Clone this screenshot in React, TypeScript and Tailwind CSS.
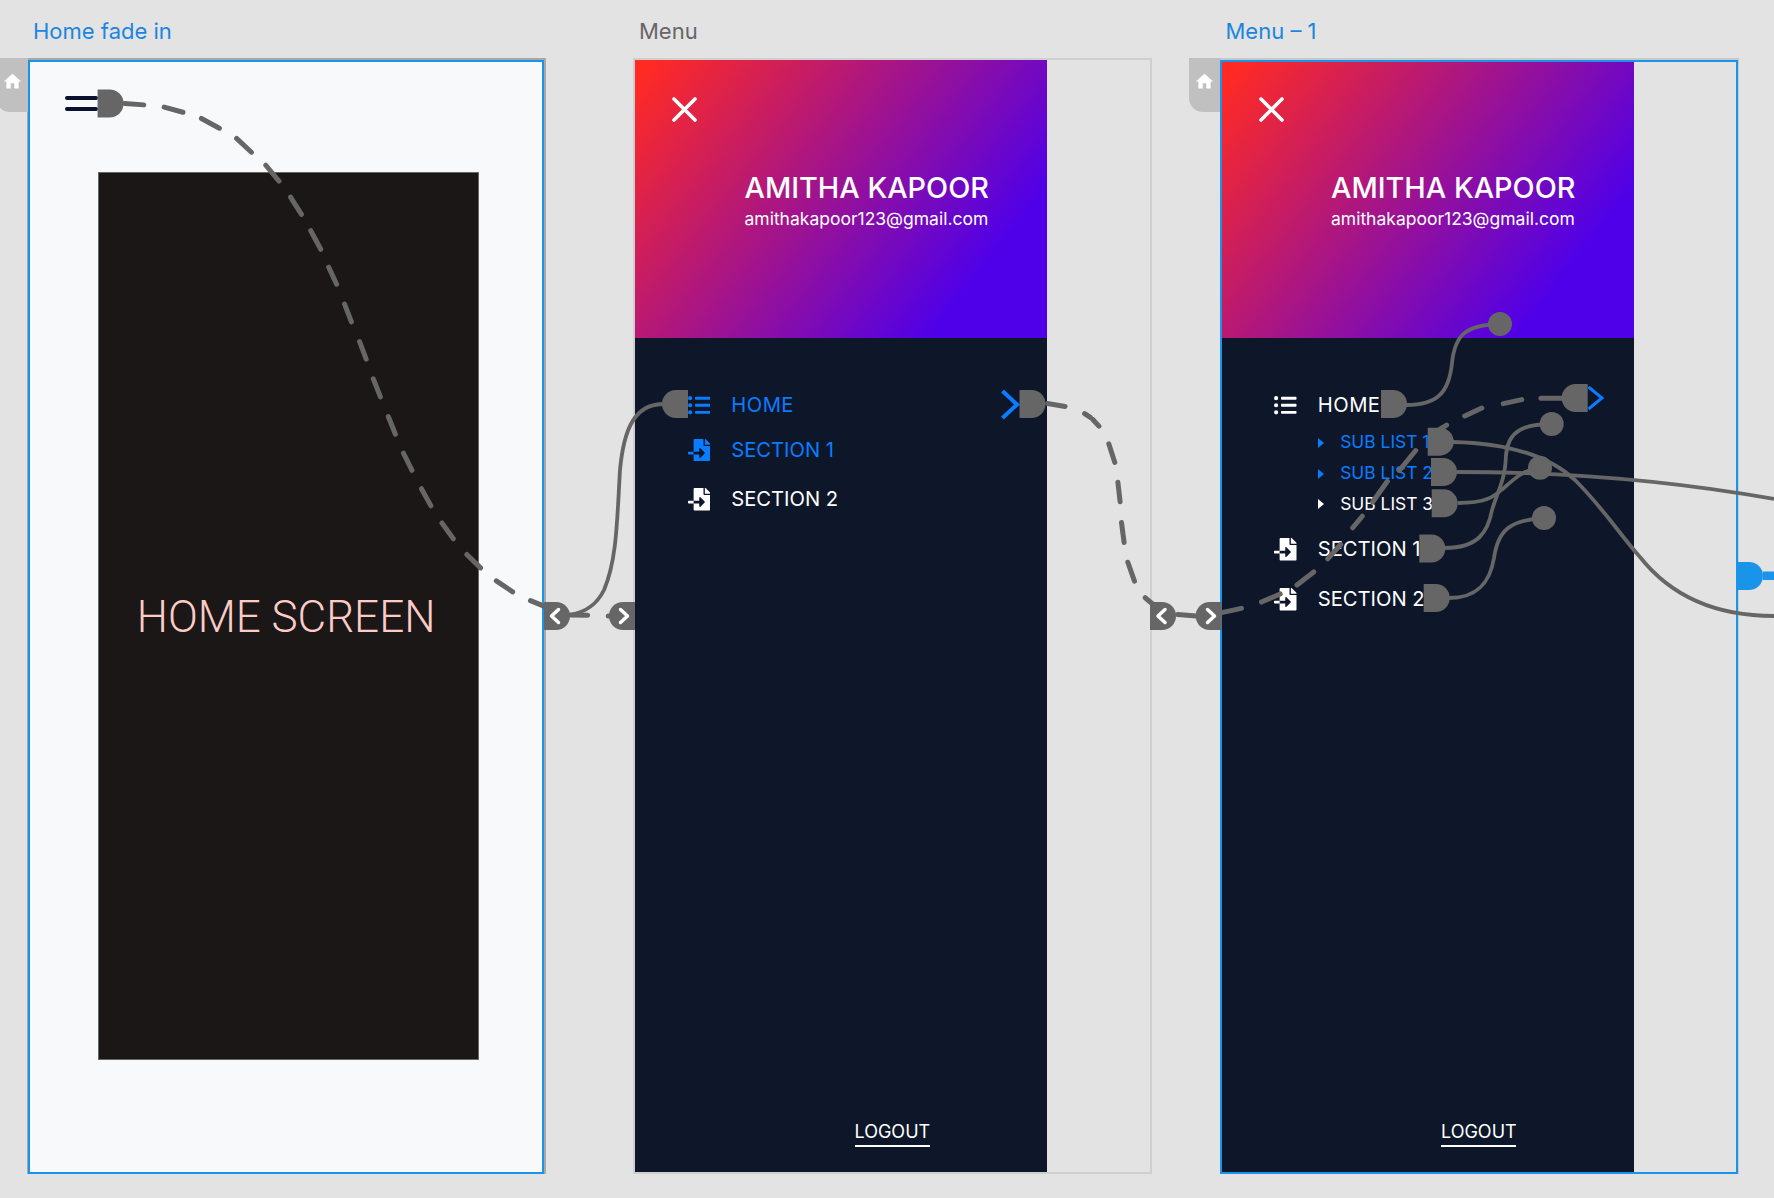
import { FaFileImport, FaListUl } from 'react-icons/fa'
import { MdHome } from 'react-icons/md'

const WIRE = '#666666'
const BLUE = '#1a94e8'

// dash tips measured from the screenshot: x1 y1 x2 y2
const dashes = [
  // hamburger to menu
  [123, 103.3, 145.4, 105], [162.6, 106.7, 184.5, 112.7], [200, 117.7, 220.8, 129], [235.4, 137.3, 252.6, 153.3],
  [264.8, 164, 280, 182.3], [289.7, 195.7, 302.3, 215.7], [310, 229.3, 321.5, 250.7], [328, 265.7, 337.3, 285.7],
  [344, 302.7, 352, 323.3], [359, 340, 366.7, 360.7], [372.7, 377.3, 381, 398.3], [387.7, 415, 396, 435.7],
  [402.7, 451.7, 412.7, 471.7], [420.7, 487.3, 431.7, 507.3], [441, 521.7, 454.3, 540], [465.7, 553.3, 481.7, 569],
  [495, 580, 514, 592.7], [529, 600, 546, 607], [569, 615, 589.3, 615.3], [606.7, 616, 612, 616],
  // menu home chevron to menu - 1
  [1046, 403.3, 1066.7, 406.7], [1083.3, 412.7, 1091.7, 418.3], [1091.7, 418.3, 1100, 427.3], [1108.3, 442.3, 1115.3, 464],
  [1117.7, 480.7, 1120.3, 503.3], [1121.3, 521, 1124.3, 544], [1127.3, 560.7, 1135, 582.7], [1144, 596.7, 1155, 606],
  [1176, 614.5, 1198, 616],
  // menu - 1 up to the sub list plug
  [1220, 613, 1243, 608], [1260, 602.7, 1281.7, 593.3], [1295.7, 586, 1315, 571], [1326.7, 560, 1341.7, 543.3],
  [1351.7, 529, 1363.3, 515], [1371.7, 503.3, 1388.3, 480], [1398.3, 471.7, 1416.7, 449.3], [1432, 434, 1448, 424.3],
  [1463.3, 416.7, 1483.3, 407.3], [1501.7, 404, 1523.3, 399.3], [1539.3, 398.3, 1564, 398.3],
]

function dashPath() {
  return dashes
    .map(([a, b, c, e]) => {
      const len = Math.hypot(c - a, e - b)
      const ux = ((c - a) / len) * 1.6
      const uy = ((e - b) / len) * 1.6
      return `M${a + ux} ${b + uy}L${c - ux} ${e - uy}`
    })
    .join('')
}

const solidWires = [
  'M662 404C636 405 624 426 620 470C617 520 617 560 604 590C597 604 587 612 570 615',
  'M1406 405C1438 405 1449 392 1452 363C1455 335 1465 325 1500 324',
  'M1453 442C1500 443 1545 452 1575 480C1605 510 1620 535 1640 557C1670 595 1715 616 1774 616',
  'M1457 472C1520 472 1640 475 1774 499',
  'M1458 503C1490 503 1495 495 1505 487C1515 478 1525 469 1540 468',
  'M1445 548C1478 548 1488 532 1492 510C1500 485 1505 480 1506 455C1508 430 1525 424 1552 424',
  'M1449 598C1478 598 1490 582 1494 558C1498 530 1510 520 1544 518',
]

// flat on the left, round on the right
function PlugRight({ x, y, fill = WIRE }: { x: number; y: number; fill?: string }) {
  return <path d={`M${x} ${y - 14}h12a14 14 0 0 1 0 28h-12z`} fill={fill} />
}

// round on the left, flat on the right; x is the flat side
function PlugLeft({ x, y }: { x: number; y: number }) {
  return <path d={`M${x} ${y - 14}h-12a14 14 0 0 0 0 28h12z`} fill={WIRE} />
}

function Chevron({ x, y, dir }: { x: number; y: number; dir: 'left' | 'right' }) {
  const d = dir === 'left' ? `M${x + 7} ${y - 6.5}L${x} ${y}L${x + 7} ${y + 6.5}` : `M${x} ${y - 6.5}L${x + 7} ${y}L${x} ${y + 6.5}`
  return <path d={d} fill="none" stroke="#fff" strokeWidth={3.5} strokeLinecap="round" strokeLinejoin="round" />
}

function Wires() {
  return (
    <svg className="absolute top-0 left-0 h-[1198px] w-[1774px]" viewBox="0 0 1774 1198" fill="none">
      {solidWires.map((d) => (
        <path key={d} d={d} stroke={WIRE} strokeWidth={3.8} />
      ))}
      <path d={dashPath()} stroke={WIRE} strokeWidth={5} strokeLinecap="round" />

      <PlugRight x={97.6} y={103.5} />
      <PlugLeft x={688} y={404} />
      <PlugRight x={1019.5} y={404} />
      <path d="M1002.5 391L1017 404.5L1002.5 418" stroke="#0a7cff" strokeWidth={4} />

      <PlugRight x={544} y={616} />
      <Chevron x={551.5} y={616} dir="left" />
      <PlugLeft x={635} y={616} />
      <Chevron x={620.5} y={616} dir="right" />
      <PlugRight x={1150} y={616} />
      <Chevron x={1158} y={616} dir="left" />
      <PlugLeft x={1221.7} y={616} />
      <Chevron x={1207.5} y={616} dir="right" />

      <PlugRight x={1381} y={404} />
      <PlugRight x={1427.7} y={441.7} />
      <PlugRight x={1431} y={472} />
      <PlugRight x={1431.7} y={503.3} />
      <PlugRight x={1419.3} y={548.5} />
      <PlugRight x={1423.7} y={598} />
      <PlugLeft x={1587.7} y={398} />
      <path d="M1588.5 387L1602 398L1588.5 409" stroke="#0a7cff" strokeWidth={3} />

      <circle cx={1500} cy={324} r={12} fill={WIRE} />
      <circle cx={1551.7} cy={424} r={12} fill={WIRE} />
      <circle cx={1540} cy={467.7} r={12} fill={WIRE} />
      <circle cx={1544} cy={518} r={12} fill={WIRE} />

      <PlugRight x={1737} y={576} fill={BLUE} />
      <rect x={1763} y={571.5} width={11} height={8.5} fill={BLUE} />
    </svg>
  )
}

function HomeTab() {
  return (
    <div className="absolute top-[-2px] left-[-33px] flex h-[54px] w-[32px] justify-center rounded-bl-[14px] bg-[#c0c0c0] pt-[13px] text-white">
      <MdHome size={21} />
    </div>
  )
}

function CloseIcon() {
  return (
    <svg width="25" height="25" viewBox="0 0 25 25" className="block">
      <path d="M2 2L23 23M23 2L2 23" stroke="#fff" strokeWidth={3.6} strokeLinecap="round" />
    </svg>
  )
}

function Caret({ active }: { active?: boolean }) {
  return (
    <svg width="6" height="10" viewBox="0 0 6 10" className={active ? 'text-[#0a7cff]' : 'text-white'}>
      <path d="M0 0L6 5L0 10z" fill="currentColor" />
    </svg>
  )
}

function MenuRow({ icon, label, className }: { icon: React.ReactNode; label: string; className: string }) {
  return (
    <div className={`flex h-6 items-center ${className}`}>
      <span className="flex w-[43.5px] shrink-0">{icon}</span>
      <span className="text-[20.2px] whitespace-nowrap">{label}</span>
    </div>
  )
}

function SubRow({ label, className }: { label: string; className: string }) {
  const active = className.includes('0a7cff')
  return (
    <div className={`flex h-6 items-center pl-[43.5px] ${className}`}>
      <span className="flex w-[22.5px] shrink-0">
        <Caret active={active} />
      </span>
      <span className="text-[17.4px] whitespace-nowrap">{label}</span>
    </div>
  )
}

function MenuPanel({ children }: { children: React.ReactNode }) {
  return (
    <div className="flex h-full w-[412px] flex-col bg-[#0e172a] text-white">
      <div className="h-[278px] shrink-0 bg-[linear-gradient(128deg,#ff2a24_3%,#5000e8_81%)] pt-[37px] pl-[37px]">
        <CloseIcon />
        <div className="mt-[48px] ml-[72.5px] w-max">
          <div className="text-[28.8px] leading-[36px] font-medium">AMITHA KAPOOR</div>
          <div className="mt-[1px] text-[17.5px] leading-[24px]">amithakapoor123@gmail.com</div>
        </div>
      </div>
      <div className="flex flex-1 flex-col pt-[55px] pl-[52.7px]">{children}</div>
      <a className="mb-[25px] ml-[219.5px] w-[75px] self-start border-b-2 border-white pb-[2px] text-center text-[18px] leading-[22px]">
        LOGOUT
      </a>
    </div>
  )
}

export default function App() {
  return (
    <div className="relative h-[1198px] w-[1774px] overflow-hidden bg-[#e3e3e3] font-['Inter',sans-serif]">
      <div className="flex pl-[29px]">
        <div className="w-[515px] pt-[19px]">
          <p className="mb-[17px] pl-[4px] text-[22px] leading-[24px] text-[#1a86e0]">Home fade in</p>
          <div className="relative h-[1112px] bg-[#f8f9fb] pt-[36px] pl-[36px] shadow-[0_0_0_2px_#a8a8a8]">
            <HomeTab />
            <div className="flex w-[33px] flex-col gap-[7.3px]">
              <div className="h-[4px] rounded-full bg-[#0b1030]" />
              <div className="h-[4px] rounded-full bg-[#0b1030]" />
            </div>
            <div className="mt-[61px] ml-[32.6px] flex h-[888px] w-[381px] items-center justify-center border border-[#666] bg-[#1a1716]">
              <span className="mt-[2px] mr-[4px] font-['Roboto',sans-serif] text-[44px] font-light whitespace-nowrap text-[#fbcbc7]">
                HOME SCREEN
              </span>
            </div>
            <div className="absolute -left-px right-0 top-0 -bottom-[2px] border-2 border-[#1a94e8]" />
          </div>
        </div>

        <div className="ml-[91px] w-[515px] pt-[19px]">
          <p className="mb-[17px] pl-[4px] text-[22px] leading-[24px] text-[#666]">Menu</p>
          <div className="relative h-[1112px] shadow-[0_0_0_2px_#cfcfcf]">
            <MenuPanel>
              <MenuRow label="HOME" icon={<FaListUl size={22.5} />} className="tracking-[0.5px] text-[#0a7cff]" />
              <MenuRow label="SECTION 1" icon={<FaFileImport size={22.5} />} className="mt-[21px] text-[#0a7cff]" />
              <MenuRow label="SECTION 2" icon={<FaFileImport size={22.5} />} className="mt-[25.5px] text-white" />
            </MenuPanel>
          </div>
        </div>

        <div className="ml-[71.5px] w-[515px] pt-[19px]">
          <p className="mb-[17px] pl-[4px] text-[22px] leading-[24px] text-[#1a86e0]">Menu – 1</p>
          <div className="relative h-[1112px] shadow-[0_0_0_2px_#c8c8c8]">
            <HomeTab />
            <MenuPanel>
              <MenuRow label="HOME" icon={<FaListUl size={22.5} />} className="tracking-[0.5px] text-white" />
              <SubRow label="SUB LIST 1" className="mt-[13.5px] text-[#0a7cff]" />
              <SubRow label="SUB LIST 2" className="mt-[7px] text-[#0a7cff]" />
              <SubRow label="SUB LIST 3" className="mt-[6.5px] text-white" />
              <MenuRow label="SECTION 1" icon={<FaFileImport size={22.5} />} className="mt-[21.5px] text-white" />
              <MenuRow label="SECTION 2" icon={<FaFileImport size={22.5} />} className="mt-[26px] text-white" />
            </MenuPanel>
            <div className="absolute -left-[2px] -right-px top-0 -bottom-[2px] border-2 border-[#1a94e8]" />
          </div>
        </div>
      </div>
      <Wires />
    </div>
  )
}
